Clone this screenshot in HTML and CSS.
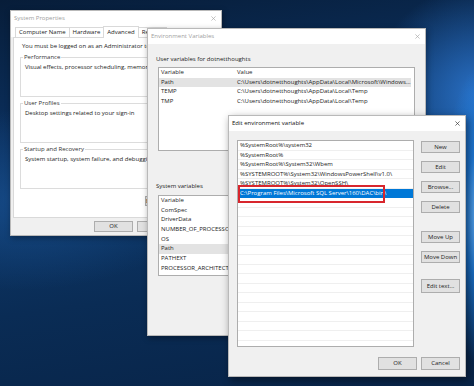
FILE: index.html
```html
<!DOCTYPE html>
<html>
  <head>
    <title>Edit environment variable</title>
    <link rel="stylesheet" href="styles.css">
  </head>
  <body>
    <div class="desktop">

      <!-- System Properties -->
      <div class="win sysprops">
        <div class="titlebar">
          <span>System Properties</span>
          <svg class="x" viewBox="0 0 6 6"><path d="M0.5 0.5L5.5 5.5M5.5 0.5L0.5 5.5"/></svg>
        </div>
        <div class="tabs">
          <span class="tab">Computer Name</span><span class="tab">Hardware</span><span class="tab active">Advanced</span><span class="tab">Remote</span>
        </div>
        <div class="tabpanel">
          <p class="notice">You must be logged on as an Administrator to make most of these changes.</p>
          <fieldset class="group">
            <legend>Performance</legend>
            <p>Visual effects, processor scheduling, memory usage, and virtual memory</p>
          </fieldset>
          <fieldset class="group">
            <legend>User Profiles</legend>
            <p>Desktop settings related to your sign-in</p>
          </fieldset>
          <fieldset class="group">
            <legend>Startup and Recovery</legend>
            <p>System startup, system failure, and debugging information</p>
          </fieldset>
          <div class="panel-actions"><button class="btn envbtn">Environment Variables...</button></div>
        </div>
        <div class="footer">
          <button class="btn">OK</button><button class="btn">Cancel</button><button class="btn">Apply</button>
        </div>
      </div>

      <!-- Environment Variables -->
      <div class="win env">
        <div class="titlebar">
          <span>Environment Variables</span>
          <svg class="x" viewBox="0 0 6 6"><path d="M0.5 0.5L5.5 5.5M5.5 0.5L0.5 5.5"/></svg>
        </div>
        <div class="env-body">
          <div class="label first">User variables for dotnetthoughts</div>
          <div class="listbox vars user">
            <div class="row head"><span>Variable</span><span>Value</span></div>
            <div class="row sel"><span>Path</span><span>C:\Users\dotnetthoughts\AppData\Local\Microsoft\Windows...</span></div>
            <div class="row"><span>TEMP</span><span>C:\Users\dotnetthoughts\AppData\Local\Temp</span></div>
            <div class="row"><span>TMP</span><span>C:\Users\dotnetthoughts\AppData\Local\Temp</span></div>
          </div>
          <div class="btnrow"><button class="btn">New...</button><button class="btn">Edit...</button><button class="btn">Delete</button></div>
          <div class="label second">System variables</div>
          <div class="listbox vars system">
            <div class="row head"><span>Variable</span><span>Value</span></div>
            <div class="row"><span>ComSpec</span><span>C:\Windows\system32\cmd.exe</span></div>
            <div class="row"><span>DriverData</span><span>C:\Windows\System32\Drivers\DriverData</span></div>
            <div class="row"><span>NUMBER_OF_PROCESSORS</span><span>4</span></div>
            <div class="row"><span>OS</span><span>Windows_NT</span></div>
            <div class="row sel"><span>Path</span><span>C:\Windows\system32;C:\Windows</span></div>
            <div class="row"><span>PATHEXT</span><span>.COM;.EXE;.BAT;.CMD</span></div>
            <div class="row"><span>PROCESSOR_ARCHITECTURE</span><span>AMD64</span></div>
            <div class="row"><span>PROCESSOR_IDENTIFIER</span><span>Intel64 Family 6</span></div>
          </div>
          <div class="btnrow"><button class="btn">New...</button><button class="btn">Edit...</button><button class="btn">Delete</button></div>
        </div>
        <div class="footer env-footer"><button class="btn">OK</button><button class="btn">Cancel</button></div>
      </div>

      <!-- Edit environment variable -->
      <div class="win edit">
        <div class="titlebar">
          <span>Edit environment variable</span>
          <svg class="x" viewBox="0 0 6 6"><path d="M0.5 0.5L5.5 5.5M5.5 0.5L0.5 5.5"/></svg>
        </div>
        <div class="edit-body">
          <div class="listbox paths">
            <div class="prow">%SystemRoot%\system32</div>
            <div class="prow">%SystemRoot%</div>
            <div class="prow">%SystemRoot%\System32\Wbem</div>
            <div class="prow">%SYSTEMROOT%\System32\WindowsPowerShell\v1.0\</div>
            <div class="prow">%SYSTEMROOT%\System32\OpenSSH\</div>
            <div class="prow sel">C:\Program Files\Microsoft SQL Server\160\DAC\bin\</div>
            <div class="prow"></div><div class="prow"></div><div class="prow"></div><div class="prow"></div>
            <div class="prow"></div><div class="prow"></div><div class="prow"></div><div class="prow"></div>
            <div class="prow"></div><div class="prow"></div><div class="prow"></div><div class="prow"></div>
            <div class="prow"></div><div class="prow"></div><div class="prow"></div>
            <div class="highlight"></div>
          </div>
          <div class="sidebtns">
            <button class="btn">New</button>
            <button class="btn">Edit</button>
            <button class="btn">Browse...</button>
            <button class="btn">Delete</button>
            <button class="btn gap">Move Up</button>
            <button class="btn">Move Down</button>
            <button class="btn gap2">Edit text...</button>
          </div>
        </div>
        <div class="footer edit-footer"><button class="btn">OK</button><button class="btn">Cancel</button></div>
      </div>

    </div>
  </body>
</html>
```

FILE: styles.css
```css
* { box-sizing: border-box; }
body { margin: 0; font-family: "Open Sans", "Noto Sans", sans-serif; font-size: 6px; color: #1c1c1c; }
p { margin: 0; }

.desktop {
  position: relative; width: 474px; height: 386px; overflow: hidden;
  background:
    radial-gradient(ellipse 40px 150px at 482px 215px, rgba(120,190,255,.95), rgba(30,130,230,.7) 45%, rgba(20,90,180,0) 100%),
    radial-gradient(ellipse 110px 110px at 480px 95px, rgba(45,120,210,.9), rgba(20,80,160,0) 100%),
    radial-gradient(ellipse 180px 90px at 20px 200px, rgba(25,80,145,.7), rgba(10,40,80,0) 100%),
    linear-gradient(172deg, #071d39 0%, #0b2f5c 30%, #0c3666 48%, #0a2c55 70%, #082448 100%);
}

/* windows */
.win { position: absolute; display: flex; flex-direction: column; background: #f0f0f0; border: 1px solid #b9b9b9; box-shadow: 1px 2px 6px rgba(0,0,0,.35); overflow: hidden; white-space: nowrap; }
.titlebar { flex: none; height: 15px; background: #fff; display: flex; align-items: center; justify-content: space-between; padding: 0 5px 1px 3px; color: #a0a0a0; }
.x { width: 5px; height: 5px; stroke: #a8a8a8; stroke-width: 0.8; fill: none; }

.btn { font: inherit; color: #1c1c1c; background: #e1e1e1; border: 1px solid #adadad; padding: 0; height: 11px; width: 39px; line-height: 9px; text-align: center; flex: none; }

/* system properties */
.sysprops { left: 10px; top: 10px; width: 212px; height: 226px; background: #f0f0f0; }
.tabs { flex: none; height: 11px; display: flex; align-items: flex-end; padding-left: 4px; background: #fff; }
.tab { height: 10px; line-height: 9px; padding: 0 3px; border: 1px solid #d9d9d9; border-bottom: none; color: #222; background: #fff; margin-right: -1px; }
.tab.active { height: 12px; line-height: 10px; position: relative; z-index: 1; margin-bottom: -1px; }
.tabpanel { flex: none; margin: 0 2px; height: 181px; background: #fff; border: 1px solid #d9d9d9; padding: 0 6px; display: flex; flex-direction: column; }
.notice { line-height: 9px; margin: 4px 0 0 2px; }
.group { margin: 2px 0 0; padding: 0 2px; border: 1px solid #dcdcdc; height: 44px; min-width: 0; }
.group + .group { margin-top: 2px; }
.group legend { padding: 0 1px; line-height: 9px; color: #333; }
.group p { line-height: 9px; margin: 1px 0 0 2px; }
.panel-actions { display: flex; justify-content: flex-end; margin-top: 7px; }
.envbtn { width: 67px; height: 10px; }
.footer { flex: none; display: flex; justify-content: flex-end; gap: 4px; }
.sysprops .footer { padding: 3px 2px 0 0; }

/* environment variables */
.env { left: 147px; top: 28px; width: 279px; height: 308px; }
.env-body { padding: 0 10px 0 10px; }
.label { line-height: 9px; margin-left: -2px; }
.label.first { margin-top: 11px; }
.label.second { margin-top: 15px; }
.listbox { background: #fff; border: 1px solid #adadad; overflow: hidden; }
.vars { margin-top: 3px; }
.vars.user { height: 84px; }
.vars.system { height: 81px; margin-top: 4px; }
.row { display: grid; grid-template-columns: 76px 1fr; height: 9.7px; line-height: 9.7px; padding-left: 2px; margin-right: 3px; overflow: hidden; }
.row.sel { background: #e3e3e3; }
.btnrow { display: flex; justify-content: flex-end; gap: 4px; margin-top: 5px; }
.env-footer { margin-top: 14px; padding-right: 10px; }

/* edit environment variable */
.edit { left: 228px; top: 115px; width: 238px; height: 262px; box-shadow: 2px 3px 8px rgba(0,0,0,.45); }
.edit .titlebar { color: #111; }
.edit .x { stroke: #333; }
.edit-body { display: grid; grid-template-columns: 177px 39px; column-gap: 7px; padding: 9px 0 0 8px; }
.paths { position: relative; height: 207px; }
.prow { height: 9.5px; line-height: 9.5px; padding-left: 2px; border-bottom: 1px solid #efefef; }
.prow.sel { background: #0078d7; color: #fff; border-bottom-color: #0078d7; }
.highlight { position: absolute; left: 0; top: 44px; width: 147px; height: 18px; border: 2px solid #d8262d; }
.sidebtns { display: flex; flex-direction: column; gap: 8px; padding-top: 1px; }
.sidebtns .btn { height: 12px; line-height: 10px; }
.sidebtns .gap { margin-top: 10px; }
.sidebtns .gap2 { margin-top: 8px; height: 14px; }
.edit-footer { margin-top: 10px; padding-right: 5px; }
.edit-footer .btn { height: 13px; line-height: 11px; }
```
